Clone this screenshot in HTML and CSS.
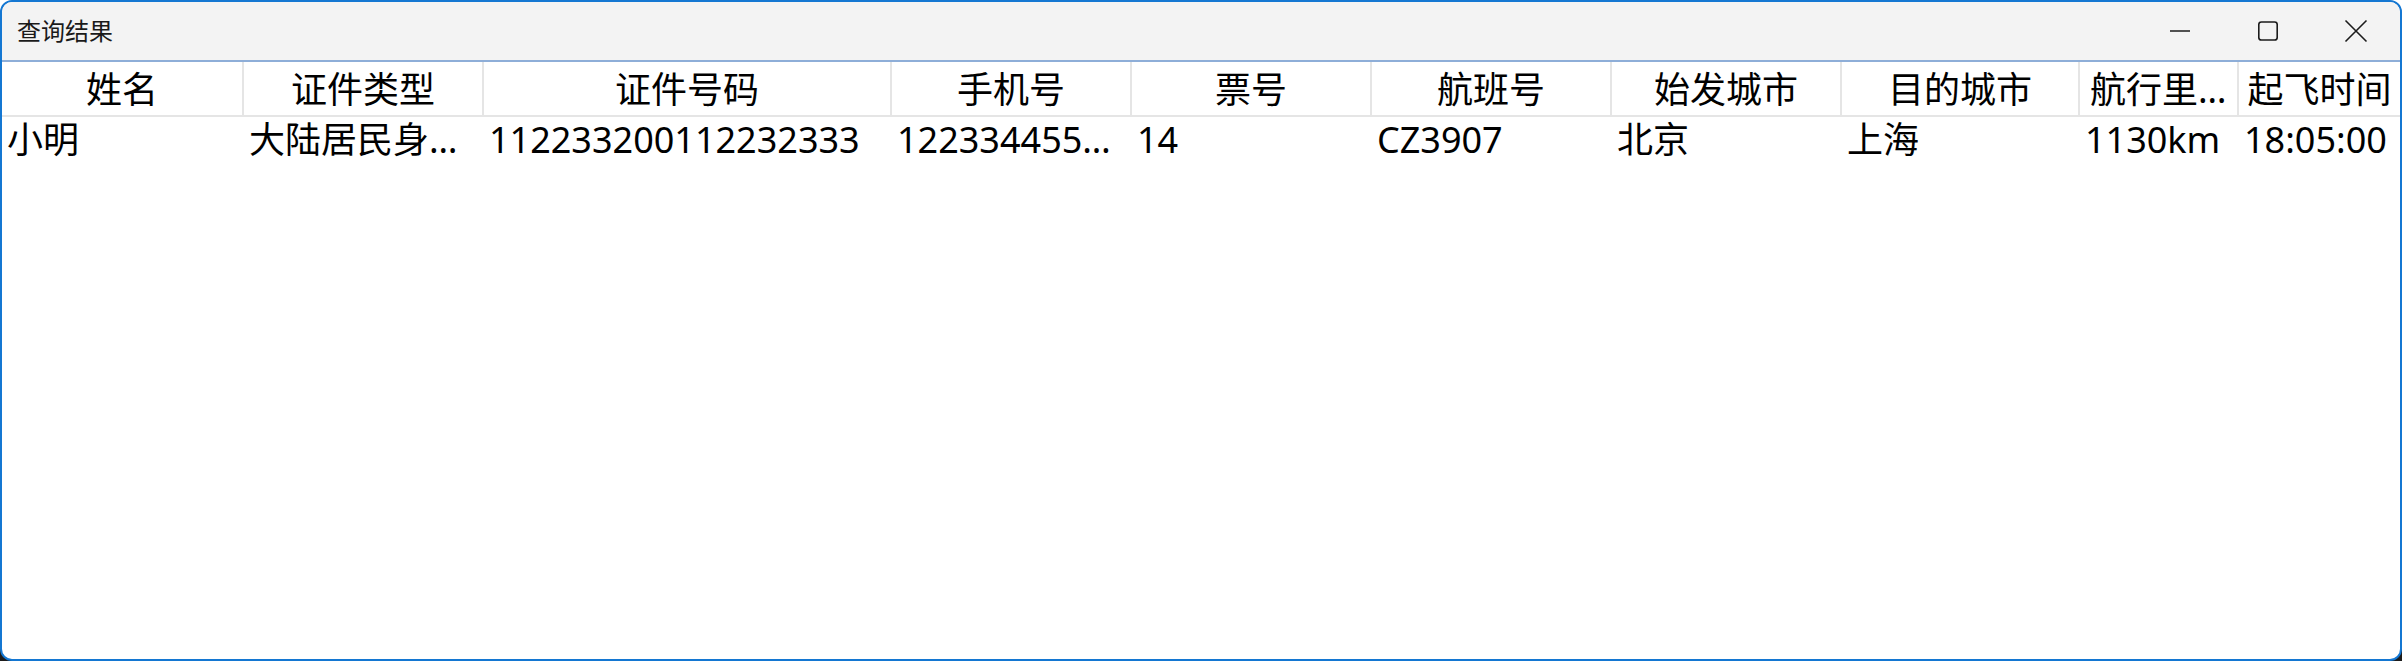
FILE: index.html
```html
<!DOCTYPE html>
<html lang="zh-CN">
<head>
<meta charset="utf-8">
<title>查询结果</title>
<link rel="stylesheet" href="styles.css">
</head>
<body>
<div class="window">
  <div class="titlebar">
    <span class="title">查询结果</span>
    <div class="controls">
      <div class="btn"><svg width="24" height="24" viewBox="0 0 24 24"><line x1="2" y1="12" x2="22" y2="12" stroke="#1b1b1b" stroke-width="1.6"/></svg></div>
      <div class="btn"><svg width="24" height="24" viewBox="0 0 24 24"><rect x="2.8" y="3" width="18.4" height="18" rx="2.6" fill="none" stroke="#1b1b1b" stroke-width="1.6"/></svg></div>
      <div class="btn"><svg width="24" height="24" viewBox="0 0 24 24"><path d="M1.5 1.5 L22.5 22.5 M22.5 1.5 L1.5 22.5" stroke="#1b1b1b" stroke-width="1.6" fill="none"/></svg></div>
    </div>
  </div>
  <div class="table">
    <div class="row head">
      <div class="cell">姓名</div>
      <div class="cell">证件类型</div>
      <div class="cell">证件号码</div>
      <div class="cell">手机号</div>
      <div class="cell">票号</div>
      <div class="cell">航班号</div>
      <div class="cell">始发城市</div>
      <div class="cell">目的城市</div>
      <div class="cell clip">航行里程</div>
      <div class="cell last">起飞时间</div>
    </div>
    <div class="row data">
      <div class="cell">小明</div>
      <div class="cell clip">大陆居民身份证</div>
      <div class="cell">112233200112232333</div>
      <div class="cell clip">12233445566</div>
      <div class="cell">14</div>
      <div class="cell">CZ3907</div>
      <div class="cell">北京</div>
      <div class="cell">上海</div>
      <div class="cell">1130km</div>
      <div class="cell">18:05:00</div>
    </div>
  </div>
</div>
</body>
</html>
```

FILE: styles.css
```css
html, body {
  margin: 0;
  padding: 0;
}

body {
  width: 2402px;
  height: 661px;
  background: linear-gradient(#ffffff 50%, #1c1c1c 50%);
  font-family: "Noto Sans", "Noto Sans CJK SC", sans-serif;
  color: #000;
  overflow: hidden;
}

.window {
  box-sizing: border-box;
  width: 2402px;
  height: 661px;
  border: 2px solid #1477d2;
  border-radius: 12px;
  background: #ffffff;
  overflow: hidden;
  display: flex;
  flex-direction: column;
}

.titlebar {
  box-sizing: border-box;
  height: 60px;
  flex: none;
  background: #f3f3f3;
  border-bottom: 2px solid #8eaed8;
  display: flex;
  align-items: center;
}

.title {
  font-size: 24px;
  padding-left: 15px;
  color: #1a1a1a;
  flex: 1;
  line-height: 1.3;
}

.controls {
  display: flex;
  height: 100%;
}

.btn {
  width: 88px;
  height: 100%;
  display: flex;
  align-items: center;
  justify-content: center;
}

.btn svg {
  display: block;
}

.row {
  display: grid;
  grid-template-columns: 242px 240px 408px 240px 240px 240px 230px 238px 159px 1fr;
  font-size: 36px;
}

.cell {
  white-space: nowrap;
  min-width: 0;
}

.cell.clip {
  overflow: hidden;
  text-overflow: ellipsis;
}

.head {
  height: 55px;
  box-sizing: border-box;
  border-bottom: 2px solid #e5e5e5;
}

.head .cell {
  box-sizing: border-box;
  border-right: 2px solid #e5e5e5;
  text-align: center;
  padding: 3px 7px 0;
  line-height: 50px;
}

.head .cell.clip {
  padding: 3px 4px 0 10px;
  text-align: left;
}

.head .cell.last {
  border-right: none;
}

.data .cell {
  padding: 0 10px 0 5px;
  line-height: 46px;
}
```
